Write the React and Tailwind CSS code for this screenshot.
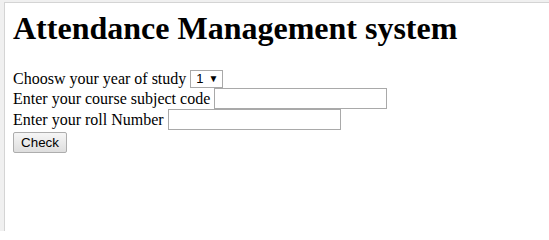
import React from "react";

export default function App() {
  return (
    <div className="w-[549px] h-[231px] bg-[#f0f0f0] overflow-hidden">
      <div className="ml-[4px] mt-[2px] h-[229px] border-l border-t border-[#d4d4d4] bg-white px-[8px] font-['Liberation_Serif',serif] text-[16px] text-black">
        <h1 className="pt-[7px] text-[32px] font-bold leading-[37px] mb-[22px]">
          Attendance Management system
        </h1>
        <form className="leading-[20px]" onSubmit={(e) => e.preventDefault()}>
          <div className="flex items-center h-[19px]">
            Choosw your year of study
            <span className="ml-[4px] flex items-center h-[18px] w-[33px] border border-[#a9a9a9] bg-white pl-[5px] pr-[4px] font-['Liberation_Sans',sans-serif] text-[13px] justify-between">
              <span>1</span>
              <span className="text-[10px]">▼</span>
            </span>
          </div>
          <div className="flex items-center h-[21px]">
            Enter your course subject code
            <input
              type="text"
              className="ml-[4px] h-[21px] w-[173px] border border-[#a9a9a9] bg-white px-[2px] font-['Liberation_Sans',sans-serif] text-[13px] outline-none"
            />
          </div>
          <div className="flex items-center h-[21px]">
            Enter your roll Number
            <input
              type="text"
              className="ml-[4px] h-[21px] w-[173px] border border-[#a9a9a9] bg-white px-[2px] font-['Liberation_Sans',sans-serif] text-[13px] outline-none"
            />
          </div>
          <div className="flex items-end h-[23px]">
            <button
              type="submit"
              className="h-[21px] w-[54px] border border-[#adadad] bg-gradient-to-b from-[#f6f6f6] to-[#dedede] rounded-[2px] font-['Liberation_Sans',sans-serif] text-[13.33px] leading-[19px] text-black"
            >
              Check
            </button>
          </div>
        </form>
      </div>
    </div>
  );
}
